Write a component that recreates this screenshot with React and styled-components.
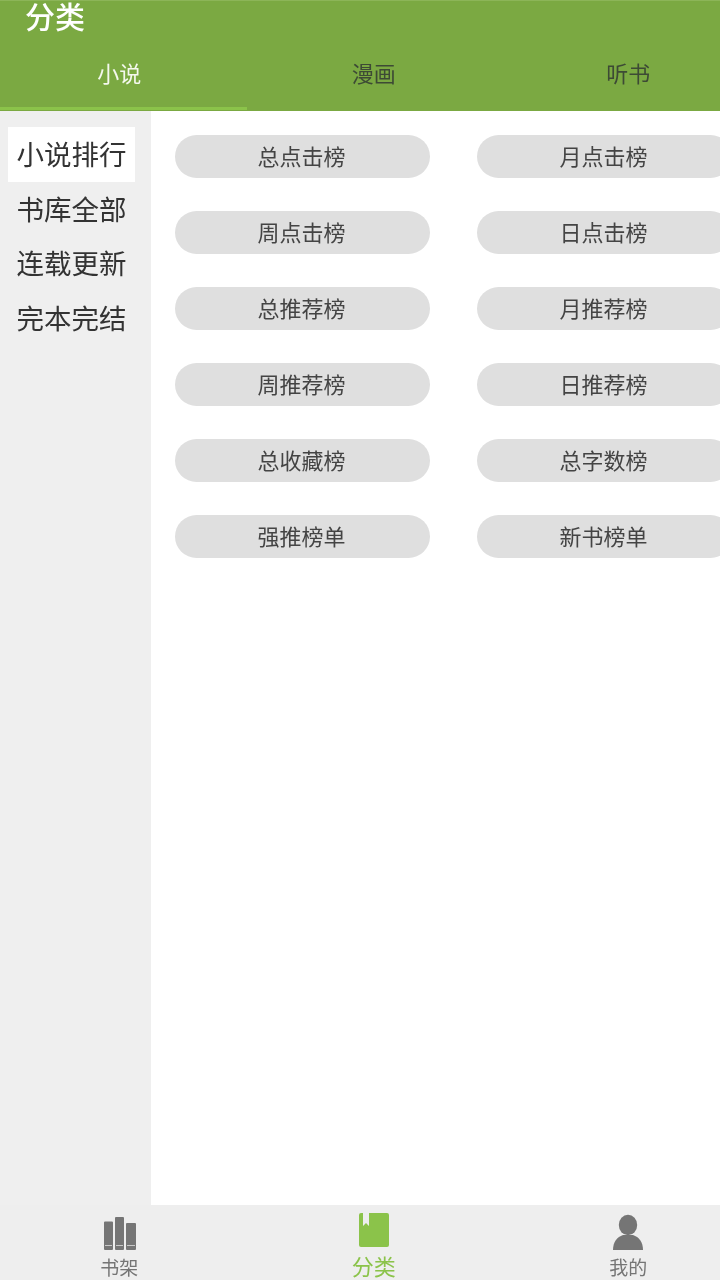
import React from "react";
import styled, { createGlobalStyle } from "styled-components";

const Global = createGlobalStyle`
  html, body { margin: 0; padding: 0; background: #fff; }
  body { font-family: "Noto Sans CJK SC", "Liberation Sans", sans-serif; }
`;

const Page = styled.div`
  width: 720px;
  height: 1280px;
  display: flex;
  flex-direction: column;
  overflow: hidden;
  background: #fff;
  filter: blur(0.5px);
`;

const Header = styled.header`
  height: 111px;
  flex: none;
  background: #7ba942;
  border-top: 1px solid #8cb558;
  box-sizing: border-box;
`;

const Title = styled.h1`
  margin: 0;
  padding: 0 0 0 25px;
  height: 30px;
  font-size: 30px;
  font-weight: 500;
  line-height: 28px;
  color: #fff;
`;

const Tabs = styled.nav`
  display: grid;
  grid-template-columns: repeat(3, 254.5px);
  margin-left: -8px;
  margin-top: 14px;
`;

const Tab = styled.div`
  height: 65px;
  box-sizing: border-box;
  padding-top: 12px;
  text-align: center;
  font-size: 22px;
  line-height: 31px;
  color: ${(p) => (p.$active ? "#f4f8ee" : "#3d4a35")};
  border-bottom: 3px solid ${(p) => (p.$active ? "#8bc34a" : "transparent")};
`;

const Body = styled.main`
  flex: 1;
  display: flex;
  min-height: 0;
`;

const Side = styled.aside`
  width: 151px;
  flex: none;
  background: #efefef;
  box-sizing: border-box;
  padding: 16px 16px 0 8px;
  display: flex;
  flex-direction: column;
`;

const SideItem = styled.div`
  height: 54.5px;
  line-height: 52px;
  text-align: center;
  font-size: 27.5px;
  white-space: nowrap;
  color: #333;
  background: ${(p) => (p.$active ? "#fff" : "transparent")};
`;

const Grid = styled.section`
  flex: 1;
  display: grid;
  grid-template-columns: repeat(2, 255px);
  grid-auto-rows: 43px;
  column-gap: 47px;
  row-gap: 33px;
  align-content: start;
  padding: 24px 0 0 24px;
  min-width: 0;
`;

const Pill = styled.div`
  background: #dfdfdf;
  border-radius: 22px;
  text-align: center;
  box-sizing: border-box;
  padding-right: 2px;
  font-size: 22px;
  line-height: 41px;
  color: #444;
`;

const Bottom = styled.nav`
  height: 75px;
  flex: none;
  background: #eee;
  display: grid;
  grid-template-columns: repeat(3, 254.5px);
  margin-left: -8px;
  width: 763.5px;
`;

const BottomItem = styled.div`
  display: flex;
  flex-direction: column;
  align-items: center;
  padding-top: ${(p) => (p.$active ? "5px" : "9px")};
  color: ${(p) => (p.$active ? "#8bc34a" : "#757575")};
`;

const IconBox = styled.svg`
  display: block;
  width: 36px;
  height: 38px;
  flex: none;
`;

const Label = styled.span`
  font-size: ${(p) => (p.$active ? "22px" : "19px")};
  line-height: 26px;
  margin-top: ${(p) => (p.$active ? "4px" : "2px")};
`;

const BooksIcon = () => (
  <IconBox viewBox="0 0 36 38">
    <path fill="currentColor" d="M3 8.500q0-1 1-1h7q1 0 1 1V35q0 1-1 1H4q-1 0-1-1zM14 4q0-1 1-1h7q1 0 1 1v31q0 1-1 1h-7q-1 0-1-1zM25 10q0-1 1-1h8q1 0 1 1v25q0 1-1 1h-8q-1 0-1-1z" />
    <path stroke="#c8c8c8" strokeWidth="1" d="M4 31.500h7M15 31.500h7M26 31.500h8" />
  </IconBox>
);

const BookIcon = () => (
  <IconBox viewBox="0 0 36 38">
    <path fill="currentColor" d="M3 5q0-2 2-2h2v13l3-3 3 3V3h18q2 0 2 2v30q0 2-2 2H5q-2 0-2-2z" />
  </IconBox>
);

const UserIcon = () => (
  <IconBox viewBox="0 0 36 38">
    <ellipse cx="18" cy="11" rx="9.200" ry="10.200" fill="currentColor" />
    <path fill="currentColor" d="M3 36c0-8 4-13 10-15h10c6 2 10 7 10 15z" />
  </IconBox>
);

const sideItems = ["小说排行", "书库全部", "连载更新", "完本完结"];
const pills = ["总点击榜", "月点击榜", "周点击榜", "日点击榜", "总推荐榜", "月推荐榜", "周推荐榜", "日推荐榜", "总收藏榜", "总字数榜", "强推榜单", "新书榜单"];

export default function App() {
  return (
    <Page>
      <Global />
      <Header>
        <Title>分类</Title>
        <Tabs>
          <Tab $active>小说</Tab>
          <Tab>漫画</Tab>
          <Tab>听书</Tab>
        </Tabs>
      </Header>
      <Body>
        <Side>
          {sideItems.map((s, i) => (
            <SideItem key={s} $active={i === 0}>{s}</SideItem>
          ))}
        </Side>
        <Grid>
          {pills.map((p) => (
            <Pill key={p}>{p}</Pill>
          ))}
        </Grid>
      </Body>
      <Bottom>
        <BottomItem><BooksIcon /><Label>书架</Label></BottomItem>
        <BottomItem $active><BookIcon /><Label $active>分类</Label></BottomItem>
        <BottomItem><UserIcon /><Label>我的</Label></BottomItem>
      </Bottom>
    </Page>
  );
}
